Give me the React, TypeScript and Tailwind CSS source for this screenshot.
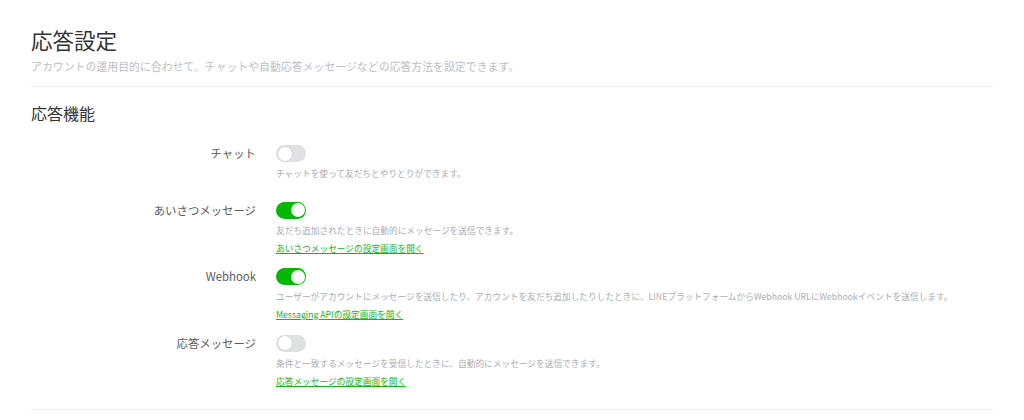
import React, { useState } from 'react';

interface FeatureRow {
  key: string;
  label: string;
  description: string;
  link?: string;
  enabled: boolean;
}

const initialRows: FeatureRow[] = [
  {
    key: 'chat',
    label: 'チャット',
    description: 'チャットを使って友だちとやりとりができます。',
    enabled: false,
  },
  {
    key: 'greeting',
    label: 'あいさつメッセージ',
    description: '友だち追加されたときに自動的にメッセージを送信できます。',
    link: 'あいさつメッセージの設定画面を開く',
    enabled: true,
  },
  {
    key: 'webhook',
    label: 'Webhook',
    description:
      'ユーザーがアカウントにメッセージを送信したり、アカウントを友だち追加したりしたときに、LINEプラットフォームからWebhook URLにWebhookイベントを送信します。',
    link: 'Messaging APIの設定画面を開く',
    enabled: true,
  },
  {
    key: 'auto',
    label: '応答メッセージ',
    description: '条件と一致するメッセージを受信したときに、自動的にメッセージを送信できます。',
    link: '応答メッセージの設定画面を開く',
    enabled: false,
  },
];

const Toggle: React.FC<{ on: boolean; onClick: () => void }> = ({ on, onClick }) => (
  <button
    onClick={onClick}
    className={`relative block w-[30px] h-[17px] rounded-full transition-colors ${on ? 'bg-[#00b900]' : 'bg-[#dfe1e5]'}`}
  >
    <span
      className={`absolute top-[1.5px] w-[14px] h-[14px] rounded-full bg-white shadow-[0_0_0_0.5px_rgba(0,0,0,0.12)] transition-all ${on ? 'left-[14.5px]' : 'left-[1.5px]'}`}
    />
  </button>
);

const App: React.FC = () => {
  const [rows, setRows] = useState(initialRows);

  const flip = (key: string) =>
    setRows(rows.map((r) => (r.key === key ? { ...r, enabled: !r.enabled } : r)));

  return (
    <div className="w-[1024px] h-[420px] bg-white overflow-hidden px-[31px] pt-[25px] font-['Noto_Sans_CJK_JP','Noto_Sans',sans-serif]">
      {/* Page header */}
      <h1 className="text-[21.5px] leading-[30px] text-[#333]">応答設定</h1>
      <p className="mt-[3px] text-[10.9px] leading-[16px] text-[#bcc0c6]">
        アカウントの運用目的に合わせて、チャットや自動応答メッセージなどの応答方法を設定できます。
      </p>
      <div className="mt-[12px] border-t border-[#ececec]" />

      {/* Section */}
      <h2 className="mt-[14px] text-[16px] leading-[24px] text-[#333]">応答機能</h2>

      <div className="mt-[20px] flex flex-col gap-[13.5px]">
        {rows.map((row, i) => (
          <div key={row.key} className={`flex ${i === 0 ? 'mb-[8px]' : ''}`}>
            <div className="w-[225px] shrink-0 text-right text-[11.4px] leading-[17px] text-[#5c5c5c]">
              {row.label}
            </div>
            <div className="ml-[20px] flex-1">
              <Toggle on={row.enabled} onClick={() => flip(row.key)} />
              <p className="mt-[6px] text-[8.7px] leading-[12px] text-[#a9adb3] whitespace-nowrap">
                {row.description}
              </p>
              {row.link && (
                <a href="#" className="mt-[6px] block text-[8.7px] leading-[12px] text-[#14b414] underline">
                  {row.link}
                </a>
              )}
            </div>
          </div>
        ))}
      </div>

      <div className="mt-[21px] border-t border-[#ececec]" />
    </div>
  );
};

export default App;
